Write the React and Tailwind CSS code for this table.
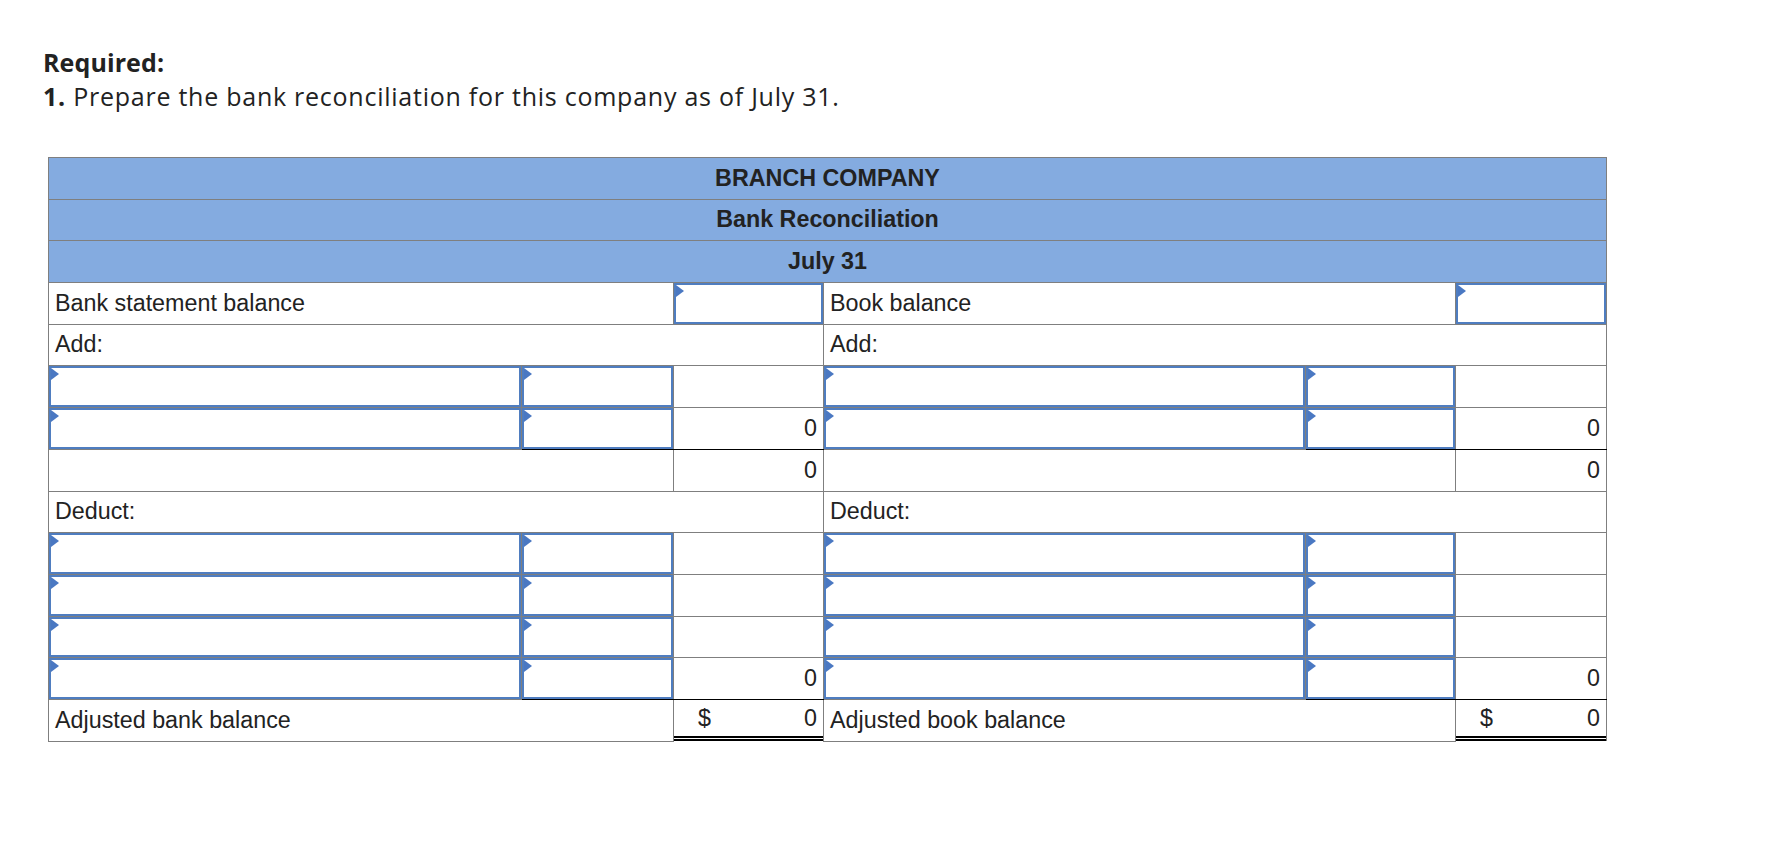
import React from 'react';

// grey grid lines and the blue answer boxes
const cell = 'border border-[#7f7f7f] px-[6px] h-[41.7px] align-middle';

function AnswerBox() {
  return (
    <div className="relative h-[40.7px] border-2 border-[#4f7dc0] bg-white">
      <span className="absolute left-0 top-0 h-0 w-0 border-y-[6px] border-l-[8px] border-y-transparent border-l-[#4a78c2]" />
    </div>
  );
}

function BoxCell({ className = '' }) {
  return (
    <td className={`border border-[#7f7f7f] p-0 h-[41.7px] align-top ${className}`}>
      <AnswerBox />
    </td>
  );
}

function Amount({ value, className = '' }) {
  return <td className={`${cell} text-right ${className}`}>{value}</td>;
}

function Header({ children }) {
  return (
    <tr>
      <td colSpan={6} className={`${cell} bg-[#84abe0] text-center font-bold`}>
        {children}
      </td>
    </tr>
  );
}

function Total() {
  return (
    <td className="border-l border-r border-t border-[#7f7f7f] border-t-black p-0 h-[41.7px] align-top">
      <div className="flex h-[35.7px] items-center justify-between pl-[24px] pr-[6px] pt-[2px]">
        <span>$</span>
        <span>0</span>
      </div>
      <div className="h-[5px] border-y-2 border-black" />
    </td>
  );
}

export default function App() {
  return (
    <div className="min-h-screen bg-white pl-[43px] pt-[45px] text-[#222]">
      <div className="font-['Open_Sans',sans-serif] text-[25px] leading-[34px] tracking-[0.75px]">
        <p className="font-bold tracking-[0.1px]">Required:</p>
        <p>
          <span className="font-bold">1.</span> Prepare the bank reconciliation for this company as of July 31.
        </p>
      </div>

      <table className="mt-[44px] ml-[5px] table-fixed border-collapse font-['Liberation_Sans',Arial,sans-serif] text-[23.3px] leading-none">
        <colgroup>
          <col className="w-[473px]" />
          <col className="w-[152px]" />
          <col className="w-[150px]" />
          <col className="w-[482px]" />
          <col className="w-[150px]" />
          <col className="w-[151px]" />
        </colgroup>
        <tbody>
          <Header>BRANCH COMPANY</Header>
          <Header>Bank Reconciliation</Header>
          <Header>July 31</Header>

          <tr>
            <td colSpan={2} className={cell}>Bank statement balance</td>
            <BoxCell />
            <td colSpan={2} className={cell}>Book balance</td>
            <BoxCell />
          </tr>
          <tr>
            <td colSpan={3} className={cell}>Add:</td>
            <td colSpan={3} className={cell}>Add:</td>
          </tr>
          <tr>
            <BoxCell />
            <BoxCell />
            <Amount value="" />
            <BoxCell />
            <BoxCell />
            <Amount value="" />
          </tr>
          <tr>
            <BoxCell />
            <BoxCell className="border-b-black" />
            <Amount value="0" className="border-b-black" />
            <BoxCell />
            <BoxCell className="border-b-black" />
            <Amount value="0" className="border-b-black" />
          </tr>
          <tr>
            <td colSpan={2} className={cell}></td>
            <Amount value="0" />
            <td colSpan={2} className={cell}></td>
            <Amount value="0" />
          </tr>
          <tr>
            <td colSpan={3} className={cell}>Deduct:</td>
            <td colSpan={3} className={cell}>Deduct:</td>
          </tr>
          {[0, 1, 2].map((i) => (
            <tr key={i}>
              <BoxCell />
              <BoxCell />
              <Amount value="" />
              <BoxCell />
              <BoxCell />
              <Amount value="" />
            </tr>
          ))}
          <tr>
            <BoxCell />
            <BoxCell className="border-b-black" />
            <Amount value="0" className="border-b-black" />
            <BoxCell />
            <BoxCell className="border-b-black" />
            <Amount value="0" className="border-b-black" />
          </tr>
          <tr>
            <td colSpan={2} className={cell}>Adjusted bank balance</td>
            <Total />
            <td colSpan={2} className={cell}>Adjusted book balance</td>
            <Total />
          </tr>
        </tbody>
      </table>
    </div>
  );
}
